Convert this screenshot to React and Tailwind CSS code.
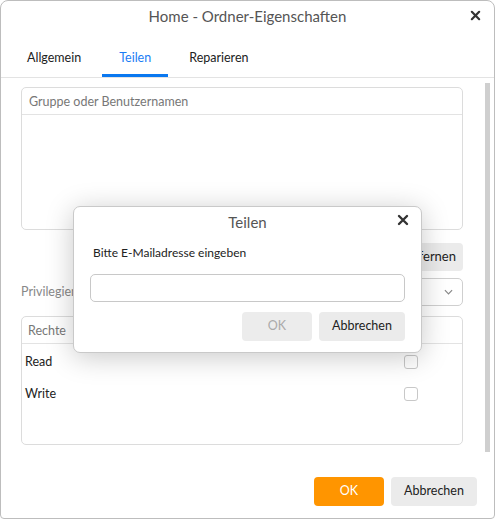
import React from 'react';

const font = { fontFamily: 'Lato, "Noto Sans", sans-serif' };

function CloseIcon({ className }) {
    return (
        <svg viewBox="0 0 12 12" className={className}>
            <path d="M2 2 L10 10 M10 2 L2 10" stroke="currentColor" strokeWidth="2.4" strokeLinecap="round" />
        </svg>
    );
}

function Checkbox() {
    return <span className="block w-[14px] h-[14px] rounded-[3px] border border-[#c8c8c8] bg-white" />;
}

function ShareDialog() {
    return (
        <div className="absolute left-[73px] top-[206px] w-[349px] h-[147px] bg-white rounded-[7px] border border-[#c9c9c9] shadow-[0_4px_28px_rgba(0,0,0,0.22)]">
            <div className="relative h-[30px] flex items-center justify-center">
                <span className="text-[15px] text-[#555]">Teilen</span>
                <button className="absolute right-[12px] top-[7px] text-[#333]">
                    <CloseIcon className="w-[12px] h-[12px]" />
                </button>
            </div>
            <div className="px-[16px] pt-[7px]">
                <p className="text-[12px] text-[#222] pl-[3px]">Bitte E-Mailadresse eingeben</p>
                <input className="mt-[12px] w-full h-[28px] rounded-[5px] border border-[#c8c8c8] outline-none" />
                <div className="flex justify-end gap-[7px] mt-[10px]">
                    <button className="w-[70px] h-[29px] rounded-[4px] bg-[#ececec] text-[12.5px] text-[#aaa]">OK</button>
                    <button className="w-[86px] h-[29px] rounded-[4px] bg-[#ebebeb] text-[12.5px] text-[#222]">Abbrechen</button>
                </div>
            </div>
        </div>
    );
}

export default function App() {
    const tabs = ["Allgemein", "Teilen", "Reparieren"];

    return (
        <div className="relative w-[495px] h-[519px] bg-white overflow-hidden" style={font}>
            <div className="w-full h-full border border-[#bdbdbd] rounded-t-[8px] rounded-b-[4px] flex flex-col">
                <div className="relative h-[31px] flex items-center justify-center">
                    <span className="text-[15px] text-[#555]">Home - Ordner-Eigenschaften</span>
                    <button className="absolute right-[13px] top-[9px] text-[#333]">
                        <CloseIcon className="w-[11px] h-[11px]" />
                    </button>
                </div>

                <div className="flex h-[46px] items-end border-b border-[#e3e3e3] pl-[10px]">
                    {tabs.map((tab, i) => (
                        <div key={tab} className={`h-full flex items-center justify-center px-[16px] text-[12.5px] ${i === 1 ? "w-[66px] mx-[5px] text-[#1a7cf5] border-b-[3px] border-[#0a78f0] pt-[10px]" : "text-[#222] pt-[7px]"}`}>
                            {tab}
                        </div>
                    ))}
                </div>

                <div className="flex flex-1 min-h-0">
                    <div className="flex-1 pl-[20px] pr-[20px] pt-[9px] flex flex-col">
                        <div className="h-[143px] rounded-[5px] border border-[#dcdcdc]">
                            <div className="h-[27px] flex items-center px-[7px] pt-[2px] border-b border-[#e3e3e3] text-[12.5px] text-[#777]">Gruppe oder Benutzernamen</div>
                        </div>

                        <div className="flex justify-end mt-[13px]">
                            <button className="h-[28px] pl-[12px] pr-[7px] rounded-[4px] bg-[#ebebeb] text-[13px] text-[#222]">Entfernen</button>
                        </div>

                        <div className="flex items-center justify-between mt-[7px] h-[28px]">
                            <span className="text-[12.5px] text-[#888]">Privilegien für</span>
                            <div className="w-[240px] h-[28px] rounded-[5px] border border-[#cfcfcf] flex items-center justify-end pr-[9px]">
                                <svg viewBox="0 0 10 6" className="w-[9px] h-[6px] text-[#888]">
                                    <path d="M1 1 L5 5 L9 1" stroke="currentColor" strokeWidth="1.3" fill="none" />
                                </svg>
                            </div>
                        </div>

                        <div className="h-[129px] mt-[10px] rounded-[5px] border border-[#dcdcdc]">
                            <div className="h-[27px] flex items-center px-[6px] pt-[2px] border-b border-[#e3e3e3] text-[12.5px] text-[#777]">Rechte</div>
                            <div className="pt-[2px]">
                                {["Read", "Write"].map(r => (
                                    <div key={r} className="h-[32px] flex items-center justify-between pl-[3px] pr-[44px] text-[12.5px] text-[#222]">
                                        <span>{r}</span>
                                        <Checkbox />
                                    </div>
                                ))}
                            </div>
                        </div>

                        <div className="flex justify-end gap-[7px] mt-[32px] -mr-[14px]">
                            <button className="w-[70px] h-[29px] rounded-[4px] bg-[#ff9500] text-[12.5px] text-white">OK</button>
                            <button className="w-[86px] h-[29px] rounded-[4px] bg-[#ebebeb] text-[12.5px] text-[#222]">Abbrechen</button>
                        </div>
                    </div>
                    <div className="w-[8px] mr-[3px] pt-[5px] flex justify-center">
                        <div className="w-[5px] h-[369px] bg-[#cfcfcf]" />
                    </div>
                </div>
            </div>

            <ShareDialog />
        </div>
    );
}
